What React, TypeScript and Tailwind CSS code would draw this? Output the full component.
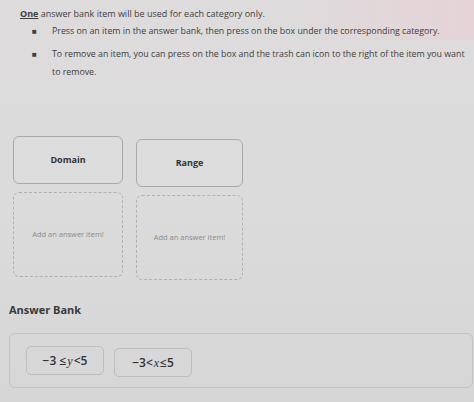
import React from "react";

export default function App() {
  return (
    <div
      className="w-[474px] h-[402px] overflow-hidden bg-gradient-to-b from-[#dedbdc] via-[#dbdbdb] to-[#d6d6d6] text-[#3a3a3a] relative"
      style={{ fontFamily: '"Open Sans", "Liberation Sans", sans-serif' }}
    >
      <div className="absolute top-0 right-0 w-[180px] h-[40px] bg-gradient-to-l from-[#e9cfd5] to-transparent opacity-70" />
      <div className="relative pl-[20px] pr-[4px] pt-[7px]">
        <p className="text-[9px] leading-[14px] text-[#404040]">
          <span className="font-bold underline">One</span> answer bank item will be used for each category only.
        </p>
        <ul className="pl-[12px] mt-[1px] text-[8.8px] leading-[18px] text-[#404040]">
          <li className="flex">
            <span className="w-[20px] shrink-0 text-[8px]">■</span>
            <span>Press on an item in the answer bank, then press on the box under the corresponding category.</span>
          </li>
          <li className="flex mt-[5px]">
            <span className="w-[20px] shrink-0 text-[8px]">■</span>
            <span>
              To remove an item, you can press on the box and the trash can icon to the right of the item you want
              <br />
              to remove.
            </span>
          </li>
        </ul>
      </div>

      <div className="relative flex gap-[13px] pl-[13px] mt-[55px]">
        <div className="flex flex-col gap-[8px] w-[110px]">
          <div className="h-[48px] rounded-[6px] border border-[#a9a9a9] bg-[#dcdcdc] flex items-center justify-center text-[9px] font-bold text-[#333]">
            Domain
          </div>
          <div className="h-[85px] rounded-[6px] border border-dashed border-[#b0b0b0] flex items-center justify-center text-[7.5px] text-[#8a8a8a]">
            Add an answer item!
          </div>
        </div>
        <div className="flex flex-col gap-[8px] w-[107px] mt-[3px]">
          <div className="h-[48px] rounded-[6px] border border-[#a9a9a9] bg-[#dcdcdc] flex items-center justify-center text-[9px] font-bold text-[#333]">
            Range
          </div>
          <div className="h-[85px] rounded-[6px] border border-dashed border-[#b0b0b0] flex items-center justify-center text-[7.5px] text-[#8a8a8a]">
            Add an answer item!
          </div>
        </div>
      </div>

      <div className="relative px-[9px] mt-[22px]">
        <div className="text-[11px] font-bold text-[#3a3a3a] leading-[16px]">Answer Bank</div>
        <div className="mt-[15px] h-[55px] w-[464px] rounded-[6px] border border-[#c4c4c4] flex items-center gap-[10px] pl-[16px]">
          <div className="h-[29px] w-[78px] rounded-[5px] border border-[#bdbdbd] flex items-center justify-center text-[12px] font-semibold text-[#333]">
            −3 ≤ <i className="font-normal mx-[1px]" style={{ fontFamily: '"Liberation Serif", serif' }}>y</i>&lt;5
          </div>
          <div className="h-[29px] w-[78px] rounded-[5px] border border-[#bdbdbd] flex items-center justify-center text-[12px] font-semibold text-[#333] mt-[4px]">
            −3&lt;<i className="font-normal mx-[1px]" style={{ fontFamily: '"Liberation Serif", serif' }}>x</i>≤5
          </div>
        </div>
      </div>
    </div>
  );
}
